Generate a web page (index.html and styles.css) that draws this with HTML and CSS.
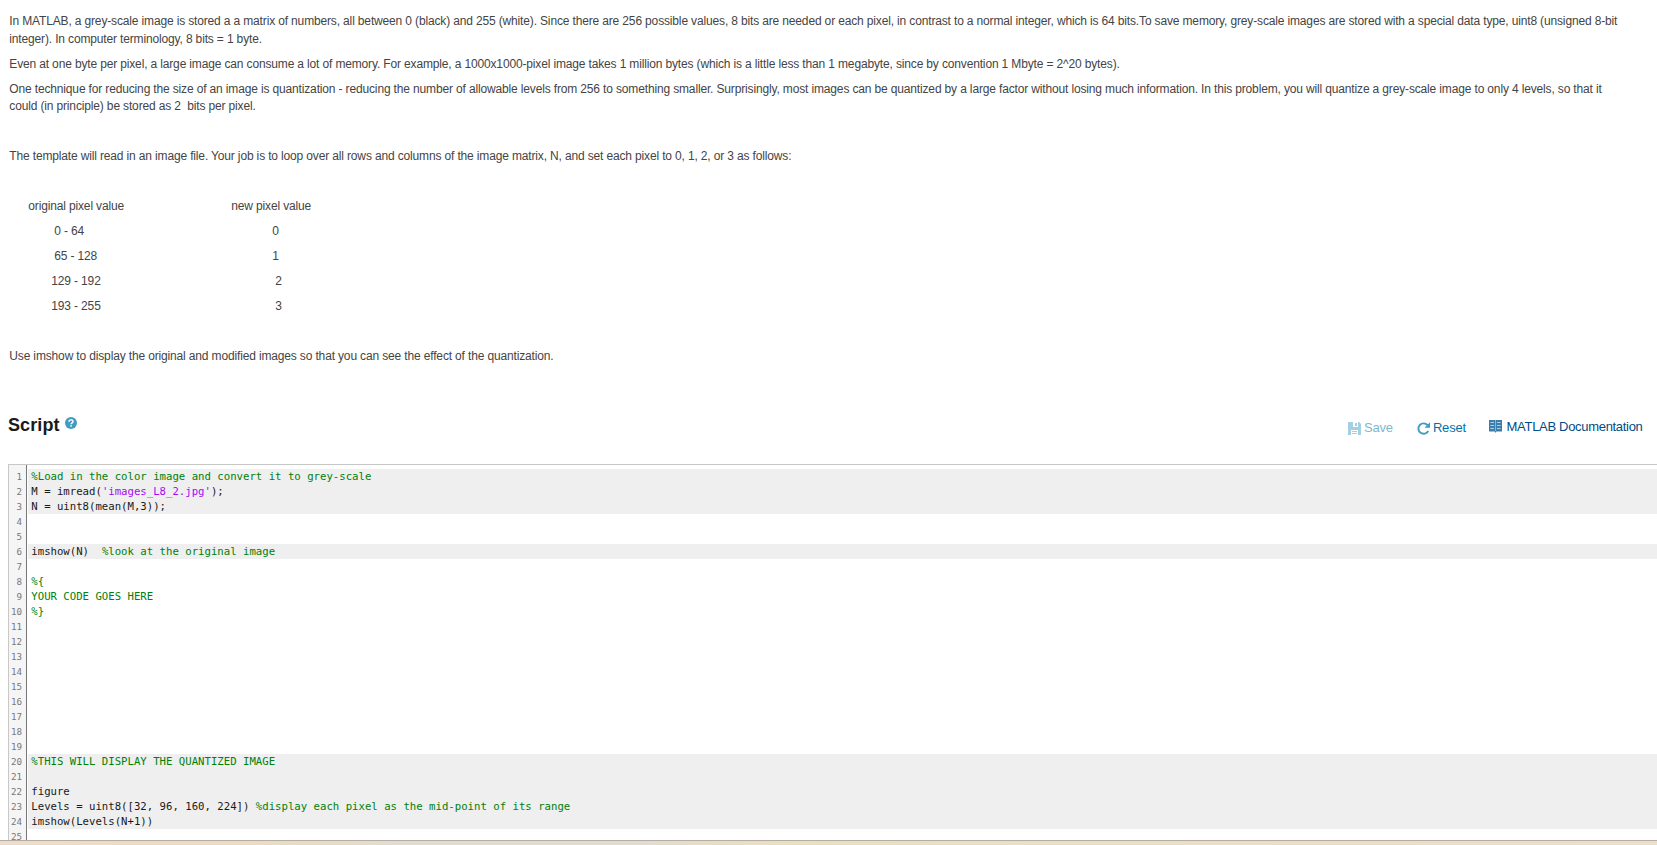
FILE: index.html
```html
<!DOCTYPE html>
<html lang="en">
<head>
<meta charset="utf-8">
<title>Image quantization</title>
<link rel="stylesheet" href="styles.css">
</head>
<body>
<main class="page">
<section class="description">
<p>In MATLAB, a grey-scale image is stored a a matrix of numbers, all between 0 (black) and 255 (white). Since there are 256 possible values, 8 bits are needed or each pixel, in contrast to a normal integer, which is 64 bits.To save memory, grey-scale images are stored with a special data type, uint8 (unsigned 8-bit<br>integer). In computer terminology, 8 bits = 1 byte.</p>
<p>Even at one byte per pixel, a large image can consume a lot of memory. For example, a 1000x1000-pixel image takes 1 million bytes (which is a little less than 1 megabyte, since by convention 1 Mbyte = 2^20 bytes).</p>
<p>One technique for reducing the size of an image is quantization - reducing the number of allowable levels from 256 to something smaller. Surprisingly, most images can be quantized by a large factor without losing much information. In this problem, you will quantize a grey-scale image to only 4 levels, so that it<br>could (in principle) be stored as 2&nbsp; bits per pixel.</p>
<p>&nbsp;</p>
<p>The template will read in an image file. Your job is to loop over all rows and columns of the image matrix, N, and set each pixel to 0, 1, 2, or 3 as follows:</p>
<p>&nbsp;</p>
<div class="levels">
<span class="c0">original pixel value</span><span class="c0">new pixel value</span>
<span class="c2">0 - 64</span><span class="v1">0</span>
<span class="c2">65 - 128</span><span class="v1">1</span>
<span class="c3">129 - 192</span><span class="v2">2</span>
<span class="c3">193 - 255</span><span class="v2">3</span>
</div>
<p>&nbsp;</p>
<p>Use imshow to display the original and modified images so that you can see the effect of the quantization.</p>
</section>
<header class="toolbar">
<h2>Script</h2>
<svg class="help" viewBox="0 0 12 12"><circle cx="6" cy="6" r="6" fill="#419cc3"/><path d="M4 4.7C4 2.3 8 2.3 8 4.5C8 5.8 6.1 5.8 6.1 7.3M6.1 8.3V9.8" fill="none" stroke="#fff" stroke-width="1.5"/></svg>
<div class="actions">
<span class="action save"><svg viewBox="0 0 13 13"><path fill="#a3cfe2" fill-rule="evenodd" d="M0 0H11L13 2V13H0ZM3 0V5H10V0ZM3 8V13H10V8Z"/><path fill="#a3cfe2" d="M3 0H5V5H3ZM7 1H9V4H7ZM4 9H9V10H4ZM4 11H9V12H4Z"/></svg>Save</span>
<span class="action reset"><svg viewBox="0 0 13 13"><path d="M10.6 3.2A5.2 5.2 0 1 0 11.2 9" fill="none" stroke="#419cc3" stroke-width="1.9"/><path d="M13 .3V5.8H7.5Z" fill="#419cc3"/></svg>Reset</span>
<span class="action docs"><svg viewBox="0 0 13 13"><path fill="#3d7fac" d="M0 0H6V11.5H0ZM7 0H13V11.5H7ZM5.5 11H7.5L6.5 13Z"/><path fill="#8db4cf" d="M6 0H7V11H6Z"/><path stroke="#b5d0e2" d="M1.5 2.5H5M1.5 5.5H5M1.5 8.5H5M8 2.5H11.5M8 5.5H11.5M8 8.5H11.5"/></svg>MATLAB Documentation</span>
</div>
</header>
<section class="editor">
<ol class="code">
<li class="ro"><code class="cm">%Load in the color image and convert it to grey-scale</code></li>
<li class="ro"><code>M = imread(<b>'images_L8_2.jpg'</b>);</code></li>
<li class="ro"><code>N = uint8(mean(M,3));</code></li>
<li></li>
<li></li>
<li class="ro"><code>imshow(N)  <i>%look at the original image</i></code></li>
<li></li>
<li><code class="cm">%{</code></li>
<li><code class="cm">YOUR CODE GOES HERE</code></li>
<li><code class="cm">%}</code></li>
<li></li>
<li></li>
<li></li>
<li></li>
<li></li>
<li></li>
<li></li>
<li></li>
<li></li>
<li class="ro"><code class="cm">%THIS WILL DISPLAY THE QUANTIZED IMAGE</code></li>
<li class="ro"></li>
<li class="ro"><code>figure</code></li>
<li class="ro"><code>Levels = uint8([32, 96, 160, 224]) <i>%display each pixel as the mid-point of its range</i></code></li>
<li class="ro"><code>imshow(Levels(N+1))</code></li>
<li></li>
</ol>
</section>
<footer class="strip"></footer>
</main>
</body>
</html>
```
FILE: styles.css
```css
*, *::before { box-sizing: border-box; }
body { margin: 0; background: #fff; font-family: "Liberation Sans", Arial, sans-serif; }
.page { height: 845px; display: flex; flex-direction: column; overflow: hidden; }
.description { height: 405px; flex: none; padding: 13.4px 0 0 9.3px; font-size: 12px; line-height: 17.14px; letter-spacing: -0.15px; color: #444; white-space: nowrap; }
.description p { margin: 0 0 7.86px; }
.levels { display: grid; grid-template-columns: 203px 200px; grid-auto-rows: 25px; padding-left: 19px; }
.c2 { padding-left: 26px; }
.c3 { padding-left: 23px; }
.v1 { padding-left: 41px; }
.v2 { padding-left: 44px; }
.toolbar { height: 59px; flex: none; display: flex; align-items: flex-start; padding: 8px 14.5px 0 8px; }
.toolbar h2 { margin: 0; font-size: 18px; line-height: 24px; letter-spacing: 0.1px; color: #1a1a1a; }
.help { width: 12px; height: 12px; margin: 4px 0 0 5px; }
.actions { margin-left: auto; display: flex; font-size: 13px; line-height: 18px; }
.action { display: flex; align-items: flex-start; white-space: nowrap; }
.action svg { width: 13px; height: 13px; margin: 3px 3px 0 0; }
.save { padding-top: 6px; margin-right: 24px; letter-spacing: -0.2px; color: #80b8d1; }
.reset { padding-top: 6px; margin-right: 23px; letter-spacing: -0.15px; color: #0072a8; }
.docs { padding-top: 5px; letter-spacing: -0.31px; color: #004b87; }
.action.docs svg { margin: 2px 4.5px 0 0; }
.editor { height: 376px; flex: none; margin-left: 8px; border-top: 1px solid #c8c8c8; border-left: 1px solid #c8c8c8; overflow: hidden; background: linear-gradient(90deg, #f5f5f5 17px, #777 17px, #777 18px, #fff 18px); }
.code { margin: 4px 0 0; padding: 0; list-style: none; counter-reset: line; }
.code li { display: flex; height: 15px; counter-increment: line; font-family: "DejaVu Sans Mono", monospace; line-height: 15px; }
.code li::before { content: counter(line); width: 19px; flex: none; padding-right: 6px; display: flex; justify-content: flex-end; font: 9.2px/16px "DejaVu Sans Mono", monospace; color: #777; }
.code code { font: 10.66px/15px "DejaVu Sans Mono", monospace; white-space: pre; color: #1a1a1a; padding-left: 3.3px; }
.ro { background: linear-gradient(90deg, transparent 19px, #efefef 19px); }
.code .cm, .code i { color: #028009; font-style: normal; }
.code b { color: #a709f5; font-weight: normal; }
.strip { height: 5px; flex: none; border-top: 1px solid #b5aca6; background: linear-gradient(90deg, #eedcc8, #ecdcc0 15%, #e2dccf 25%, #e2dccf 38%, #ebdfbd 48%, #ebdec5 65%, #ecdfca); }
```
